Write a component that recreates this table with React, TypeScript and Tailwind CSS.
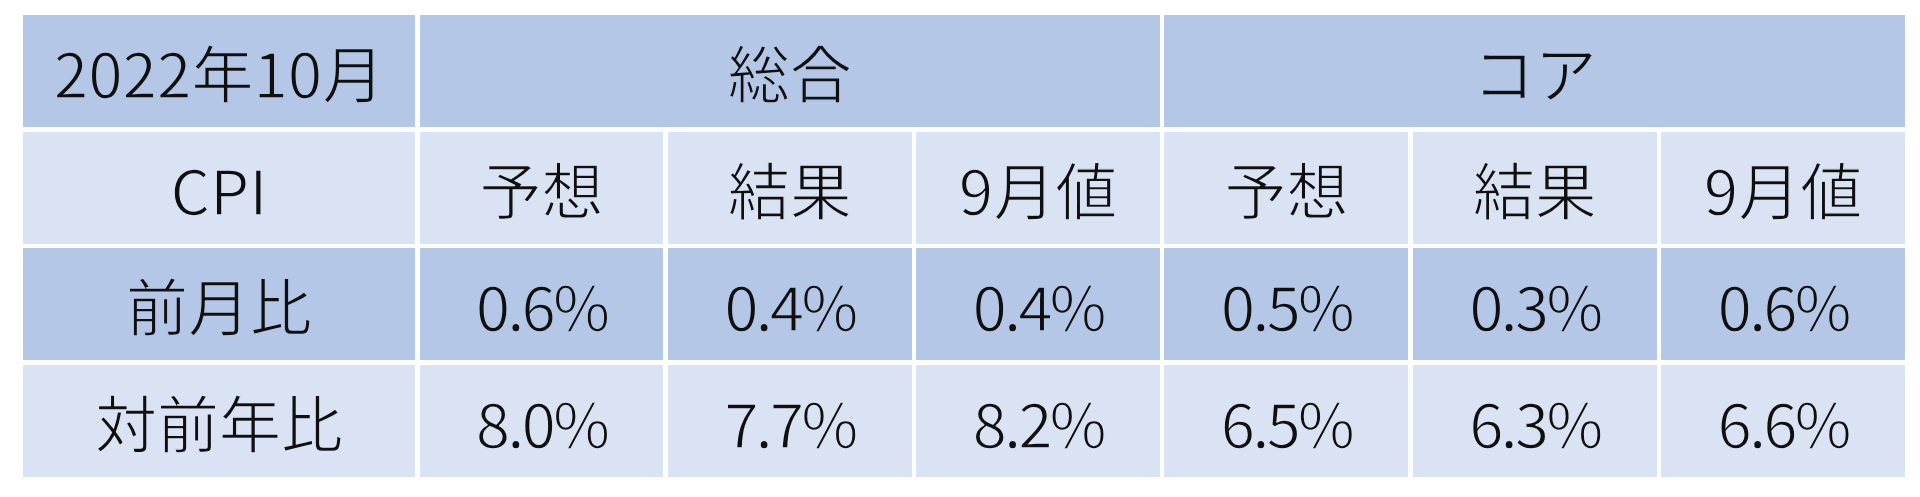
const dark = 'bg-[#b4c7e7] [-webkit-text-stroke:1.4px_#b4c7e7]'
const light = 'bg-[#dae3f3] [-webkit-text-stroke:1.4px_#dae3f3]'

const rows = [
  { label: '前月比', values: ['0.6%', '0.4%', '0.4%', '0.5%', '0.3%', '0.6%'], tone: dark },
  { label: '対前年比', values: ['8.0%', '7.7%', '8.2%', '6.5%', '6.3%', '6.6%'], tone: light },
]

const subHeads = ['予想', '結果', '9月値', '予想', '結果', '9月値']

function Cell({ children, tone, span, num }: { children: React.ReactNode; tone: string; span?: string; num?: boolean }) {
  return (
    <div className={`${tone} ${span ?? ''} flex items-center justify-center h-[112px]`}>
      <span className={`leading-none ${num ? 'tracking-[-3px]' : ''}`}>{children}</span>
    </div>
  )
}

export default function App() {
  return (
    <div className="w-[1920px] h-[497px] bg-white pl-[23px] pt-[15px]">
      <div
        className="grid grid-cols-[392px_repeat(6,minmax(0,1fr))] gap-[4.5px] w-[1882px] text-[62px] text-[#0f0f0f]"
        style={{ fontFamily: '"Noto Sans CJK JP", "Noto Sans", sans-serif' }}
      >
        <Cell tone={dark}>2022年10月</Cell>
        <Cell tone={dark} span="col-span-3">総合</Cell>
        <Cell tone={dark} span="col-span-3">コア</Cell>

        <Cell tone={light}>CPI</Cell>
        {subHeads.map((h, i) => (
          <Cell key={i} tone={light}>{h}</Cell>
        ))}

        {rows.map((r) => (
          <>
            <Cell key={r.label} tone={r.tone}>{r.label}</Cell>
            {r.values.map((v, i) => (
              <Cell key={r.label + i} tone={r.tone} num>{v}</Cell>
            ))}
          </>
        ))}
      </div>
    </div>
  )
}
